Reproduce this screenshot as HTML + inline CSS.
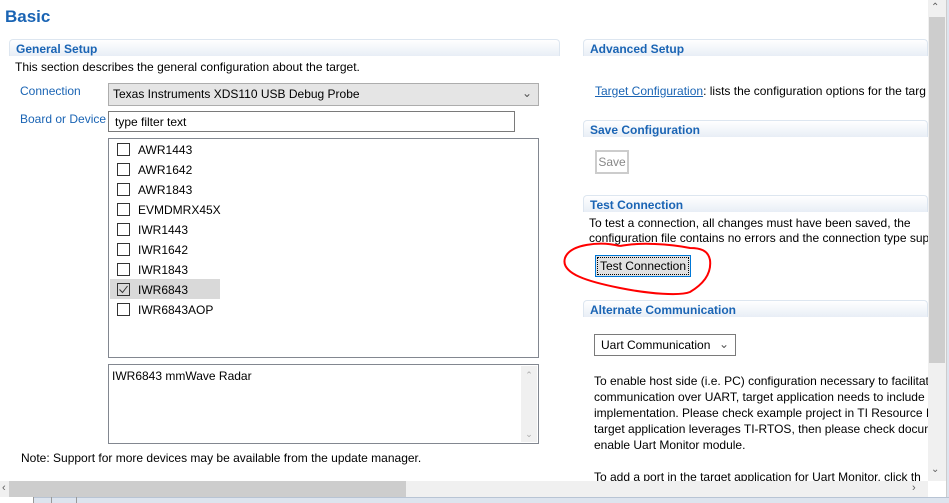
<!DOCTYPE html>
<html><head><style>
*{margin:0;padding:0;box-sizing:border-box}
body{width:949px;height:503px;overflow:hidden;background:#fff;font-family:"Liberation Sans",sans-serif;font-size:12px;color:#000;position:relative}
.a{position:absolute;white-space:nowrap}
.hdr{position:absolute;height:17px;border:1px solid #dde6f0;border-bottom:none;border-radius:4px 4px 0 0;background:linear-gradient(#fff,#e8eef6);color:#1a64b4;font-weight:bold;padding:2px 0 0 6px;font-size:12px}
.blue{color:#1a64b4}
.cb{position:absolute;width:13px;height:13px;border:1px solid #333;background:#fff}
.btn{position:absolute;border:1px solid #adadad;background:#e1e1e1;text-align:center}
</style></head><body>
<div class="a" style="left:5px;top:7px;font-size:17px;font-weight:bold;color:#1a64b4">Basic</div>

<div class="hdr" style="left:9px;top:39px;width:551px">General Setup</div>
<div class="a" style="left:15px;top:60px">This section describes the general configuration about the target.</div>
<div class="a blue" style="left:20px;top:84px">Connection</div>
<div class="a" style="left:108px;top:83px;width:431px;height:23px;border:1px solid #adadad;background:#e5e5e5;padding:3px 0 0 4px">Texas Instruments XDS110 USB Debug Probe<span style="position:absolute;right:6px;top:2px;color:#555">&#8964;</span></div>
<div class="a blue" style="left:20px;top:112px">Board or Device</div>
<div class="a" style="left:108px;top:111px;width:407px;height:21px;border:1px solid #7a7a7a;padding:3px 0 0 6px">type filter text</div>

<div class="a" style="left:108px;top:138px;width:431px;height:220px;border:1px solid #828790"></div>
<div class="a" style="left:110px;top:279px;width:110px;height:20px;background:#d9d9d9"></div>
<div class="cb" style="left:117px;top:143px"></div><div class="a" style="left:138px;top:143px">AWR1443</div>
<div class="cb" style="left:117px;top:163px"></div><div class="a" style="left:138px;top:163px">AWR1642</div>
<div class="cb" style="left:117px;top:183px"></div><div class="a" style="left:138px;top:183px">AWR1843</div>
<div class="cb" style="left:117px;top:203px"></div><div class="a" style="left:138px;top:203px">EVMDMRX45X</div>
<div class="cb" style="left:117px;top:223px"></div><div class="a" style="left:138px;top:223px">IWR1443</div>
<div class="cb" style="left:117px;top:243px"></div><div class="a" style="left:138px;top:243px">IWR1642</div>
<div class="cb" style="left:117px;top:263px"></div><div class="a" style="left:138px;top:263px">IWR1843</div>
<div class="cb" style="left:117px;top:283px;background:transparent"><svg width="11" height="11" style="position:absolute;left:0;top:0"><path d="M1.5 5.5L4.5 8.5L9.5 2" stroke="#333" fill="none"/></svg></div><div class="a" style="left:138px;top:283px">IWR6843</div>
<div class="cb" style="left:117px;top:303px"></div><div class="a" style="left:138px;top:303px">IWR6843AOP</div>

<div class="a" style="left:108px;top:364px;width:431px;height:80px;border:1px solid #828790;padding:4px 0 0 3px">IWR6843 mmWave Radar
<div style="position:absolute;right:1px;top:1px;width:16px;height:76px;background:#f0f0f0;color:#aaa;font-size:9px;text-align:center"><div style="margin-top:4px">&#8963;</div><div style="position:absolute;bottom:2px;width:16px">&#8964;</div></div></div>
<div class="a" style="left:21px;top:451px">Note: Support for more devices may be available from the update manager.</div>

<div class="hdr" style="left:583px;top:39px;width:345px">Advanced Setup</div>
<div class="a" style="left:595px;top:84px"><span class="blue" style="text-decoration:underline">Target Configuration</span>: lists the configuration options for the targ</div>
<div class="hdr" style="left:583px;top:120px;width:345px">Save Configuration</div>
<div class="btn" style="left:595px;top:150px;width:34px;height:24px;background:#fff;border:2px solid #ccc;color:#888;padding-top:3px">Save</div>
<div class="hdr" style="left:583px;top:195px;width:345px">Test Connection</div>
<div class="a" style="left:589px;top:216px">To test a connection, all changes must have been saved, the</div>
<div class="a" style="left:589px;top:231px">configuration file contains no errors and the connection type sup</div>
<div class="btn" style="left:595px;top:255px;width:96px;height:22px;border-color:#0078d7;padding-top:3px"><div style="position:absolute;inset:1px;border:1px dotted #000"></div>Test Connection</div>
<svg class="a" style="left:560px;top:238px" width="160" height="64"><path d="M60 8C40 3 10 6 5 20C0 36 30 44 60 50C90 56 120 58 130 54C140 48 152 38 150 22C148 12 140 10 130 10C110 6 80 4 60 8" stroke="#f00" stroke-width="2" fill="none"/></svg>
<div class="hdr" style="left:583px;top:300px;width:345px">Alternate Communication</div>
<div class="a" style="left:594px;top:334px;width:142px;height:22px;border:1px solid #7a7a7a;padding:3px 0 0 6px">Uart Communication<span style="position:absolute;right:6px;top:2px;color:#555">&#8964;</span></div>
<div class="a" style="left:594px;top:373px;line-height:16px">To enable host side (i.e. PC) configuration necessary to facilitate<br>communication over UART, target application needs to include<br>implementation. Please check example project in TI Resource Ex<br>target application leverages TI-RTOS, then please check docume<br>enable Uart Monitor module.<br><br>To add a port in the target application for Uart Monitor, click th</div>

<div class="a" style="left:928px;top:0;width:18px;height:481px;background:#f0f0f0"></div>
<div class="a" style="left:929px;top:17px;width:16px;height:346px;background:#cdcdcd"></div>
<div class="a" style="left:931px;top:2px;font-size:10px;color:#606060">&#8963;</div>
<div class="a" style="left:931px;top:464px;font-size:10px;color:#606060">&#8964;</div>
<div class="a" style="left:946px;top:0;width:3px;height:503px;background:#dde4ee;border-left:1px solid #ccc"></div>
<div class="a" style="left:0;top:481px;width:928px;height:16px;background:#f0f0f0"></div>
<div class="a" style="left:9px;top:481px;width:397px;height:16px;background:#cdcdcd"></div>
<div class="a" style="left:2px;top:482px;font-size:11px;color:#606060">&#8249;</div>
<div class="a" style="left:912px;top:482px;font-size:11px;color:#606060">&#8250;</div>
<div class="a" style="left:0;top:497px;width:949px;height:6px;background:#dde4ee;border-top:1px solid #b8c4d4"></div>
<div class="a" style="left:0;top:497px;width:34px;height:6px;background:#fff;border-right:1px solid #999"></div>
<div class="a" style="left:51px;top:497px;width:1px;height:6px;background:#999"></div>
<div class="a" style="left:76px;top:497px;width:1px;height:6px;background:#999"></div>
</body></html>
